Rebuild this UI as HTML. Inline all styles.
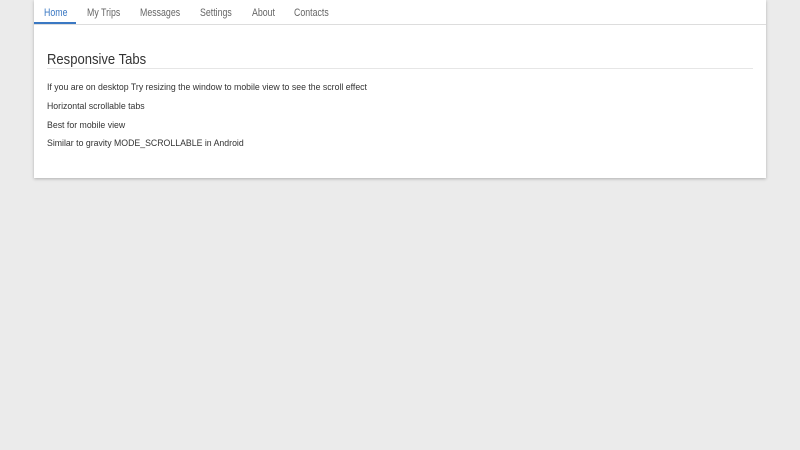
<!DOCTYPE html>
<html><head><style>
body{margin:0;background:#ebebeb;font-family:"Liberation Sans",sans-serif;width:800px;height:450px;overflow:hidden}
.card{position:absolute;left:34px;top:0;width:732px;height:178px;background:#fff;box-shadow:0 1px 3px rgba(0,0,0,.25)}
.tabs{height:24px;border-bottom:1px solid #ddd;position:relative}
.tab{position:absolute;top:1px;font-size:11px;color:#666;line-height:25px;transform:scaleX(.8);transform-origin:left}
.home{color:#3a78c3}
.ul{position:absolute;left:0;top:22px;width:42px;height:2px;background:#3a78c3}
h2{position:absolute;left:13px;top:51px;margin:0;font-size:15px;font-weight:normal;color:#333;transform:scaleX(.87);transform-origin:left}
.hr{position:absolute;left:13px;top:68px;width:706px;height:1px;background:#e6e6e6}
p{position:absolute;left:13px;margin:0;font-size:9.5px;color:#333;transform:scaleX(.92);transform-origin:left;white-space:nowrap}
</style></head><body>
<div class="card">
<div class="tabs">
<span class="tab home" style="left:10px">Home</span>
<span class="tab" style="left:53px">My Trips</span>
<span class="tab" style="left:106px">Messages</span>
<span class="tab" style="left:166px">Settings</span>
<span class="tab" style="left:218px">About</span>
<span class="tab" style="left:260px">Contacts</span>
<div class="ul"></div>
</div>
<h2>Responsive Tabs</h2>
<div class="hr"></div>
<p style="top:82px">If you are on desktop Try resizing the window to mobile view to see the scroll effect</p>
<p style="top:101px">Horizontal scrollable tabs</p>
<p style="top:120px">Best for mobile view</p>
<p style="top:138px">Similar to gravity MODE_SCROLLABLE in Android</p>
</div>
</body></html>
